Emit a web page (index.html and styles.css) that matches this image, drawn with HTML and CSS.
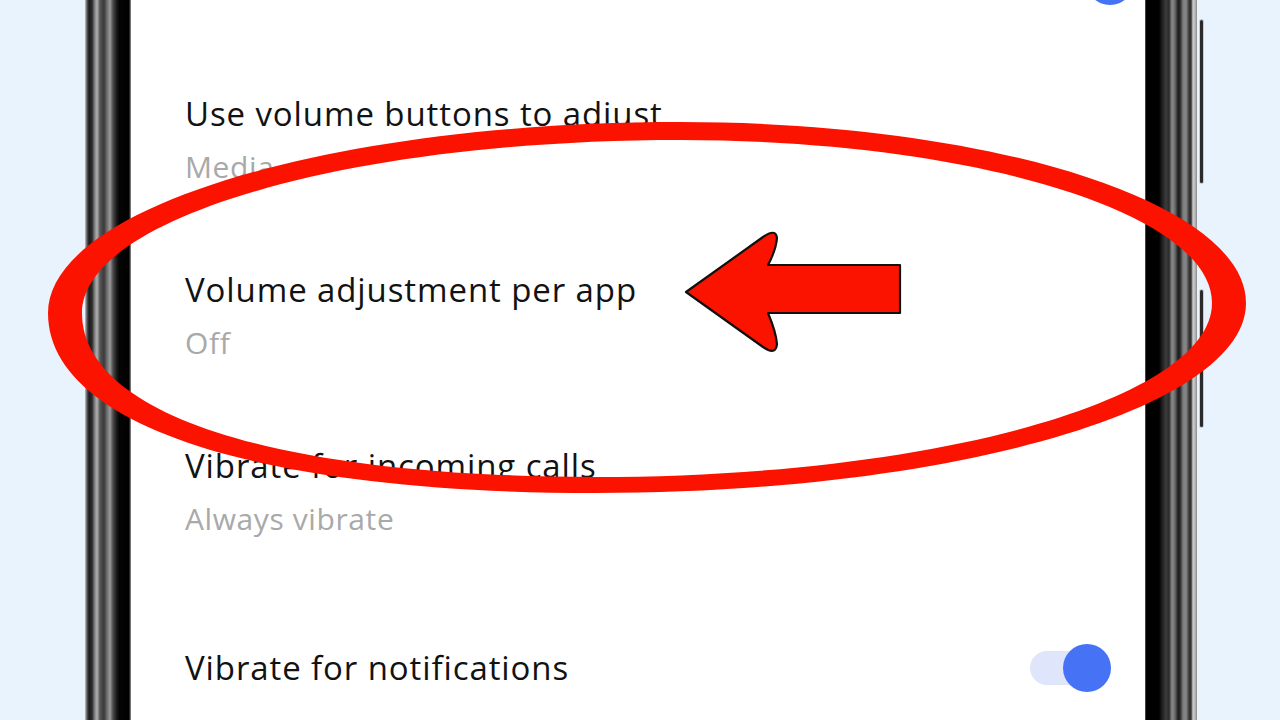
FILE: index.html
```html
<!DOCTYPE html>
<html lang="en">
<head>
<meta charset="utf-8">
<title>Sound settings</title>
<link rel="stylesheet" href="styles.css">
</head>
<body>
<div class="stage">
  <div class="outside"></div>
  <div class="bezel-left"></div>
  <div class="screen">
    <div class="prev-knob"></div>
    <div class="list">
      <div class="row">
        <div class="title">Use volume buttons to adjust</div>
        <div class="sub">Media</div>
      </div>
      <div class="row">
        <div class="title">Volume adjustment per app</div>
        <div class="sub">Off</div>
      </div>
      <div class="row">
        <div class="title">Vibrate for incoming calls</div>
        <div class="sub">Always vibrate</div>
      </div>
      <div class="row row-toggle">
        <div class="title">Vibrate for notifications</div>
        <div class="toggle"><div class="track"></div><div class="knob"></div></div>
      </div>
    </div>
  </div>
  <div class="bezel-right"></div>
  <div class="side">
    <div class="btn btn-top"></div>
    <div class="btn btn-mid"></div>
  </div>

  <svg class="overlay" width="1280" height="720" viewBox="0 0 1280 720" xmlns="http://www.w3.org/2000/svg">
    <path fill="#fb1300" fill-rule="evenodd" d="
      M48,313 C48,207.5 331,122 680,122 C992.6,122 1246,203 1246,303 C1246,408 954.5,493 595,493 C256,493 48,424.6 48,313 Z
      M82,313 C82,217.5 350,140 680,140 C973.8,140 1212,213 1212,303 C1212,399 935.8,477 595,477 C277,477 82,414.7 82,313 Z"/>
    <path fill="#fb1300" stroke="#111" stroke-width="2.2" stroke-linejoin="round"
      d="M686,292 L763,237 Q776,228 777,238 Q776,250 768,265 L900,265 L900,313 L768,313 Q776,332 777,344 Q776,356 763,347 Z"/>
  </svg>
</div>
</body>
</html>
```

FILE: styles.css
```css
html, body {
  margin: 0;
  padding: 0;
  background: #e9f3fd;
}

.stage {
  position: relative;
  width: 1280px;
  height: 720px;
  overflow: hidden;
  display: flex;
  background: #e9f3fd;
  font-family: "Open Sans", "Noto Sans", sans-serif;
}

.outside {
  width: 85px;
  flex: none;
}

.bezel-left {
  width: 46px;
  flex: none;
  background: linear-gradient(to right,
    #c4c8cc 0px, #5a5a5a 2px, #1c1c1c 4px, #2a2a2a 7px, #8a8a8a 10px, #b0b0b0 12px,
    #555 15px, #3a3a3a 19px, #6e6e6e 22px, #9a9a9a 25px, #4a4a4a 28px, #222 31px,
    #050505 34px, #000 44px, #9a9a9a 46px);
}

.screen {
  position: relative;
  width: 1014px;
  flex: none;
  background: #ffffff;
  box-sizing: border-box;
  padding: 94px 34px 0 54px;
}

.prev-knob {
  position: absolute;
  top: -43px;
  right: 11px;
  width: 48px;
  height: 48px;
  border-radius: 50%;
  background: #4672f6;
}

.list {
  display: flex;
  flex-direction: column;
  gap: 83px;
}

.row {
  display: flex;
  flex-direction: column;
}

.title {
  font-size: 33px;
  line-height: 40px;
  letter-spacing: 0.9px;
  color: #121212;
  white-space: nowrap;
}

.sub {
  margin-top: 13px;
  font-size: 30px;
  line-height: 40px;
  letter-spacing: 0.6px;
  color: #a9a9a9;
  white-space: nowrap;
}

.row-toggle {
  flex-direction: row;
  align-items: center;
  justify-content: space-between;
  margin-top: 22px;
}

.toggle {
  position: relative;
  width: 81px;
  height: 48px;
  display: flex;
  align-items: center;
}

.track {
  width: 72px;
  height: 34px;
  border-radius: 17px;
  background: #dfe5fb;
}

.knob {
  position: absolute;
  right: 0;
  top: 0;
  width: 48px;
  height: 48px;
  border-radius: 50%;
  background: #4672f6;
}

.bezel-right {
  width: 52px;
  flex: none;
  background: linear-gradient(to right,
    #8a8a8a 0px, #000 1px, #000 14px, #1e1e1e 17px, #3c3c3c 21px, #2a2a2a 24px,
    #8c8c8c 27px, #6a6a6a 30px, #1e1e1e 33px, #262626 35px, #7c7c7c 38px, #888 41px,
    #3a3a3a 44px, #2e2e2e 46px, #cfcfcf 48px, #b8b8b8 50px, #8a8a8a 52px);
}

.side {
  width: 12px;
  flex: none;
  display: flex;
  flex-direction: column;
  padding-top: 20px;
}

.btn {
  width: 3px;
  margin-left: 3px;
  background: #2a2a2a;
  border-radius: 2px;
  box-shadow: 0 0 0 1px #c9c9c9;
}

.btn-top {
  height: 163px;
}

.btn-mid {
  height: 137px;
  margin-top: 107px;
}

.overlay {
  position: absolute;
  left: 0;
  top: 0;
  pointer-events: none;
}
```
